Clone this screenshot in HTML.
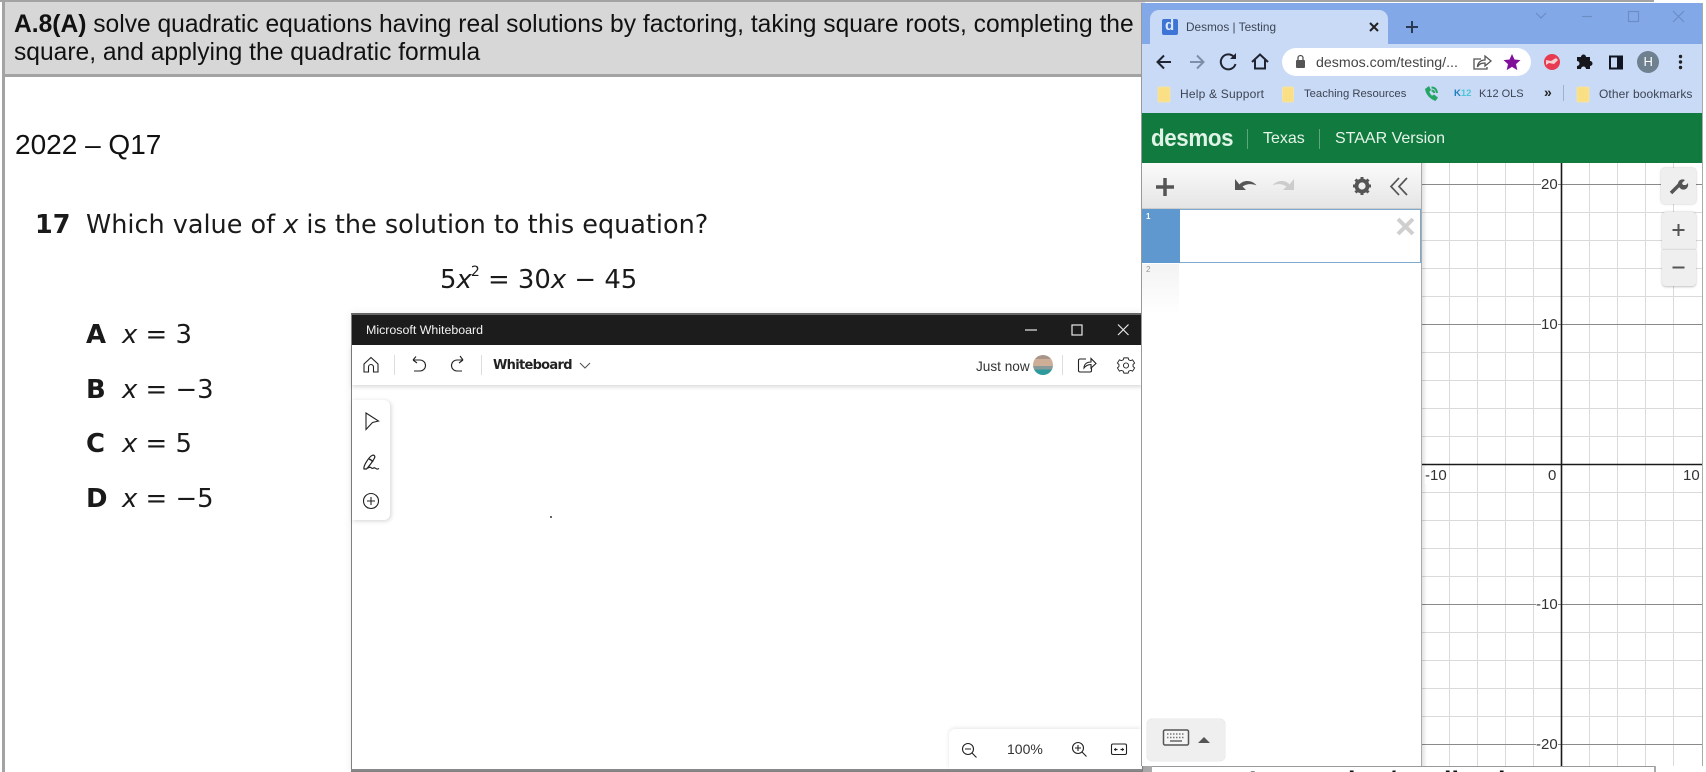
<!DOCTYPE html>
<html>
<head>
<meta charset="utf-8">
<style>
html,body{margin:0;padding:0;width:1706px;height:772px;overflow:hidden;background:#fff}
body{position:relative;font-family:"Liberation Sans",sans-serif;color:#111}
.a{position:absolute}
.t{position:absolute;white-space:nowrap}
svg{position:absolute;overflow:visible}
.dv{font-family:"DejaVu Sans",sans-serif;color:#1a1a1a}
.q{font-size:25.5px;line-height:32px}
.m{font-size:25.9px;line-height:32px}
.ct{font-size:12px;line-height:16px;color:#3c4452}
</style>
</head>
<body>
<!-- left document -->
<div class="a" style="left:0;top:0;width:1654px;height:2px;background:#a3a3a3"></div>
<div class="a" style="left:2px;top:0;width:3px;height:772px;background:#a3a3a3"></div>
<div class="a" style="left:5px;top:2px;width:1140px;height:72px;background:#d7d7d7"></div>
<div class="a" style="left:5px;top:74px;width:1140px;height:3px;background:#a3a3a3"></div>
<div class="t" style="left:14px;top:11px;font-size:24.6px;line-height:28px;color:#111"><b>A.8(A)</b> solve quadratic equations having real solutions by factoring, taking square roots, completing the</div>
<div class="t" style="left:14px;top:39px;font-size:24.6px;line-height:28px;color:#111">square, and applying the quadratic formula</div>
<div class="t" style="left:15px;top:129px;font-size:28px;line-height:32px;color:#111">2022 – Q17</div>

<div class="t dv q" style="left:35px;top:209px"><b>17</b></div>
<div class="t dv q" style="left:86px;top:209px">Which value of <i>x</i> is the solution to this equation?</div>
<div class="t dv m" style="left:440px;top:264px">5<i>x</i><sup style="font-size:14px;line-height:0;position:relative;top:-2px;margin-left:-1px">2</sup> = 30<i>x</i> − 45</div>
<div class="t dv m" style="left:86px;top:319px"><b>A</b></div>
<div class="t dv m" style="left:122px;top:319px"><i>x</i> = 3</div>
<div class="t dv m" style="left:86px;top:374px"><b>B</b></div>
<div class="t dv m" style="left:122px;top:374px"><i>x</i> = −3</div>
<div class="t dv m" style="left:86px;top:428px"><b>C</b></div>
<div class="t dv m" style="left:122px;top:428px"><i>x</i> = 5</div>
<div class="t dv m" style="left:86px;top:483px"><b>D</b></div>
<div class="t dv m" style="left:122px;top:483px"><i>x</i> = −5</div>

<!-- bottom strip -->
<div class="a" style="left:1141px;top:766px;width:565px;height:6px;background:#fff;overflow:hidden">
  <div class="a" style="left:0;top:0;width:513px;height:1px;background:#999"></div>
  <div class="a" style="left:0;top:0;width:11px;height:6px;background:#aaa"></div>
  <div class="a" style="left:513px;top:0;width:2px;height:6px;background:#aaa"></div>
  <div class="t" style="left:108px;top:0;font-size:27px;line-height:30px;font-weight:bold;color:#111">Instruction/application</div>
</div>

<!-- Whiteboard window -->
<div class="a" style="left:351px;top:313px;width:790px;height:456px;background:#fff;border:1px solid #808080;border-top:2px solid #666;box-shadow:0 0 8px rgba(0,0,0,.08)"></div>
<div class="a" style="left:352px;top:315px;width:790px;height:30px;background:#1c1c1c"></div>
<div class="t" style="left:366px;top:322px;font-size:12.4px;line-height:16px;color:#f2f2f2">Microsoft Whiteboard</div>
<svg style="left:0;top:0" width="1706" height="772" fill="none" stroke="#e8e8e8" stroke-width="1.2">
  <path d="M1025 330h12"/>
  <rect x="1072" y="325" width="10" height="10"/>
  <path d="M1118 324.500l10.500 10.500M1128.500 324.500l-10.500 10.500"/>
</svg>
<div class="a" style="left:352px;top:345px;width:790px;height:40px;background:#fff;box-shadow:0 2px 4px rgba(0,0,0,.15)"></div>
<div class="a" style="left:394px;top:355px;width:1px;height:20px;background:#ddd"></div>
<div class="a" style="left:481px;top:355px;width:1px;height:20px;background:#ddd"></div>
<div class="a" style="left:1062px;top:355px;width:1px;height:20px;background:#ddd"></div>
<div class="t" style="left:493px;top:357px;font-size:13px;line-height:18px;font-weight:bold;color:#222;font-family:'DejaVu Sans',sans-serif;letter-spacing:-.7px">Whiteboard</div>
<div class="t" style="left:976px;top:358px;font-size:13.6px;line-height:18px;color:#333">Just now</div>
<div class="a" style="left:1033px;top:355px;width:20px;height:20px;border-radius:50%;background:linear-gradient(#a8958a 0 20%,#cfae98 20% 55%,#8a9a9a 55% 72%,#2f9a9c 72%)"></div>
<svg style="left:0;top:0" width="1706" height="772" fill="none" stroke="#222" stroke-width="1.1">
  <path d="M364 364l7-6.500 7 6.500v8h-4.500v-5a2.500 2.500 0 0 0-5 0v5H364z"/>
  <path d="M413 360l3-3.500M413 360l4 3M413 360h7a5 5 0 0 1 0 11h-6"/>
  <path d="M463 360l-3-4M463 360l-4 3M463 360h-6a5.500 5.500 0 0 0 0 11h5"/>
  <path d="M580 363l5 5 5-5" stroke="#555"/>
  <path d="M1086 359h-6a1.500 1.500 0 0 0-1.500 1.500v10a1.500 1.500 0 0 0 1.500 1.500h10a1.500 1.500 0 0 0 1.500-1.500v-3"/>
  <path d="M1084 368c0-4 3-6 7-6v-3.500l5 5-5 4.500v-3.500c-3 0-5 1-7 3.500z"/>
  <g transform="translate(1126 365.500) scale(.85) translate(-1126 -366)">
  <path d="M1123.500 357h5l.7 2.300 2.300 1 2.200-1 2.400 3.800-1.800 1.700v2.400l1.800 1.700-2.400 3.800-2.200-1-2.300 1-.7 2.300h-5l-.7-2.300-2.300-1-2.200 1-2.400-3.800 1.800-1.700v-2.400l-1.800-1.700 2.400-3.800 2.200 1 2.300-1z"/>
  <circle cx="1126" cy="366" r="3"/>
  </g>
</svg>
<div class="a" style="left:352px;top:400px;width:38px;height:120px;background:#fff;border-radius:0 6px 6px 0;box-shadow:1px 1px 5px rgba(0,0,0,.18)"></div>
<svg style="left:0;top:0" width="1706" height="772" fill="none" stroke="#222" stroke-width="1.1">
  <path d="M366 413l12.500 8-6 1.500-6.500 7z"/>
  <path d="M364 469c-1-3 5-12 8-13.500 2-1 3.500.5 2.500 2.500-1.500 3-6 9-8 11zM366.500 468.500c3-1 3.500-2 5-.5s2-1 3.500 0 2 1.500 4 .5M369 459c1.500 .5 3 1.500 4 3" stroke-width="1.200"/>
  <circle cx="371" cy="501" r="7.500"/><path d="M371 497v8M367 501h8"/>
</svg>
<div class="a" style="left:550px;top:516px;width:2px;height:2px;background:#666"></div>
<!-- zoom panel -->
<div class="a" style="left:949px;top:729px;width:192px;height:40px;background:#fff;border-radius:6px 0 0 0;box-shadow:0 -1px 4px rgba(0,0,0,.1)"></div>
<div class="t" style="left:1007px;top:741px;font-size:14px;line-height:16px;color:#333">100%</div>
<svg style="left:0;top:0" width="1706" height="772" fill="none" stroke="#222" stroke-width="1.1">
  <circle cx="968" cy="749" r="5.500"/><path d="M965 749h6M972 753l4.500 4.500"/>
  <circle cx="1078" cy="748" r="5.500"/><path d="M1075 748h6M1078 745v6M1082 752l4.500 4.500"/>
  <rect x="1111.500" y="744" width="15" height="10.500" rx="1.500"/>
  <path d="M1114 749.500h3.500M1120.500 749.500h3.500" stroke-width="1.300"/>
  <path d="M1114 749.500l2-1.800v3.600zM1124 749.500l-2-1.800v3.600z" fill="#222" stroke="none"/>
</svg>
<div class="a" style="left:351px;top:769px;width:791px;height:2px;background:#888"></div>

<!-- Chrome window -->
<div class="a" style="left:1141px;top:3px;width:562px;height:763px;background:#fff;border-left:1px solid #999;border-right:1px solid #aaa;box-sizing:border-box"></div>
<div class="a" style="left:1142px;top:3px;width:560px;height:41px;background:#83a8e8"></div>
<div class="a" style="left:1142px;top:44px;width:560px;height:69px;background:#c9daf6"></div>
<div class="a" style="left:1150px;top:10px;width:238px;height:36px;background:#c9daf6;border-radius:9px 9px 0 0"></div>
<div class="a" style="left:1162px;top:19px;width:16px;height:16px;background:#3d74d6;border-radius:2px"></div>
<div class="t" style="left:1165px;top:17px;font-size:15px;line-height:18px;font-weight:bold;color:#dde8fa">d</div>
<div class="t ct" style="left:1186px;top:19px;font-size:11.8px">Desmos | Testing</div>
<svg style="left:0;top:0" width="1706" height="772" fill="none" stroke="#222" stroke-width="2">
  <path d="M1370 23l8 8M1378 23l-8 8"/>
  <path d="M1412 21v12M1406 27h12" stroke="#2a3a55"/>
  <g stroke="#6c8cc4" stroke-width="1.200">
    <path d="M1536 13l5 5 5-5"/>
    <path d="M1582 16.500h10"/>
    <rect x="1628.500" y="11.500" width="10" height="10"/>
    <path d="M1673 11l11 11M1684 11l-11 11"/>
  </g>
  <path d="M1171 62h-13M1164 55.500l-6.500 6.500 6.500 6.500" stroke="#1f2430"/>
  <path d="M1190 62h13M1197 55.500l6.500 6.500-6.500 6.500" stroke="#7e8ea8"/>
  <path d="M1234 57a7.500 7.500 0 1 0 1.500 7" stroke="#1f2430"/>
  <path d="M1236 53v6h-6z" fill="#1f2430" stroke="none"/>
  <path d="M1252 62l8-7.500 8 7.500M1255 60v8.500h10V60" stroke="#1f2430"/>
</svg>
<div class="a" style="left:1282px;top:48px;width:249px;height:28px;background:#fff;border-radius:14px"></div>
<div class="a" style="left:1296px;top:60px;width:9px;height:8px;background:#555;border-radius:1px"></div>
<svg style="left:0;top:0" width="1706" height="772" fill="none" stroke="#555" stroke-width="1.300">
  <path d="M1298 60v-2a2.500 2.500 0 0 1 5 0v2"/>
  <path d="M1485 60v-4l6 5-6 5v-3c-4 0-6 1-7.500 4 0-4 3-7 7.500-7z"/>
  <path d="M1481 59h-7v10h13v-2"/>
  <path d="M1512 54l2.500 5.500 6 .6-4.500 4 1.300 6-5.300-3.200-5.300 3.200 1.300-6-4.500-4 6-.6z" fill="#80109a" stroke="none"/>
  <circle cx="1552" cy="62" r="8" fill="#e83a50" stroke="none"/>
  <path d="M1546 60l5 1 5-3 2 2-4 4-5-1-3 2z" fill="#f4d0d0" stroke="none"/>
  <path d="M1577 58h4a2.500 2.500 0 0 1 5 0h4v4a2.500 2.500 0 0 1 0 5v3h-4a2.500 2.500 0 0 0-5 0h-4v-3a2.500 2.500 0 0 0 0-5z" fill="#15171d" stroke="none" transform="translate(0 -1)"/>
  <rect x="1610" y="56.500" width="12" height="12" stroke="#101420" stroke-width="2"/>
  <rect x="1617" y="56.500" width="6" height="12" fill="#101420" stroke="none"/>
  <circle cx="1680.500" cy="56.500" r="1.700" fill="#222" stroke="none"/>
  <circle cx="1680.500" cy="62" r="1.700" fill="#222" stroke="none"/>
  <circle cx="1680.500" cy="67.500" r="1.700" fill="#222" stroke="none"/>
  <g fill="#fbdf85" stroke="#f3e3a8" stroke-width="1">
    <rect x="1158" y="87" width="12" height="15" rx="1.500"/>
    <rect x="1282.500" y="87" width="11" height="15" rx="1.500"/>
    <rect x="1577" y="87" width="12" height="15" rx="1.500"/>
  </g>
  <path d="M1425 89c1 6 5 10 10.500 12l2.500-3.500-4-3-2 1.200c-1-1-2.200-2.400-2.600-4l1.600-1.700-2-4z" fill="#25a565" stroke="none"/>
  <path d="M1431.500 87.500c3 0 5 2 5.500 5.500M1431.500 90.500c1.500 0 2.500 1 2.700 2.500" stroke="#25a565" stroke-width="2"/>
  <path d="M1563.500 85v16" stroke="#9fb0c8" stroke-width="1"/>
</svg>
<div class="t" style="left:1316px;top:54px;font-size:14.2px;line-height:18px;color:#444">desmos.com/testing/...</div>
<div class="a" style="left:1637px;top:51px;width:22px;height:22px;border-radius:50%;background:#6f808e"></div>
<div class="t" style="left:1643.500px;top:54px;font-size:13px;line-height:16px;color:#fff">H</div>
<div class="t ct" style="left:1180px;top:85.500px;letter-spacing:.2px">Help &amp; Support</div>
<div class="t ct" style="left:1304px;top:86px;font-size:11.3px">Teaching Resources</div>
<div class="t" style="left:1454px;top:87px;font-size:9.5px;line-height:14px;font-weight:bold;color:#1e7fc0">K<span style="color:#4cc6d8">12</span></div>
<div class="t ct" style="left:1479px;top:86px;font-size:11px">K12 OLS</div>
<div class="t" style="left:1544px;top:84px;font-size:14px;line-height:16px;font-weight:bold;color:#222">»</div>
<div class="t ct" style="left:1599px;top:85.500px;letter-spacing:.1px">Other bookmarks</div>

<!-- Desmos green bar -->
<div class="a" style="left:1142px;top:113px;width:560px;height:50px;background:#117a3e"></div>
<div class="t" style="left:1151px;top:125px;font-size:24px;line-height:28px;font-weight:bold;color:#dff3e6;letter-spacing:-.4px;transform:scaleX(.93);transform-origin:0 0">desmos</div>
<div class="a" style="left:1247px;top:129px;width:1px;height:20px;background:#5fa67c"></div>
<div class="a" style="left:1319px;top:129px;width:1px;height:20px;background:#5fa67c"></div>
<div class="t" style="left:1263px;top:129px;font-size:16px;line-height:20px;color:#e6f4ea">Texas</div>
<div class="t" style="left:1335px;top:129px;font-size:16px;line-height:20px;color:#e6f4ea">STAAR Version</div>

<!-- graph -->
<svg style="left:0;top:0" width="1706" height="772">
  <g stroke="#dadada" stroke-width="1" fill="none">
    <path d="M1449.500 163V766M1477.500 163V766M1505.500 163V766M1533.500 163V766M1589.500 163V766M1617.500 163V766M1645.500 163V766M1673.500 163V766"/>
    <path d="M1422 212.500H1702M1422 240.500H1702M1422 268.500H1702M1422 296.500H1702M1422 352.500H1702M1422 380.500H1702M1422 408.500H1702M1422 436.500H1702M1422 492.500H1702M1422 520.500H1702M1422 548.500H1702M1422 576.500H1702M1422 632.500H1702M1422 660.500H1702M1422 688.500H1702M1422 716.500H1702"/>
  </g>
  <g stroke="#8a8a8a" stroke-width="1" fill="none">
    <path d="M1422 184.500H1702M1422 324.500H1702M1422 604.500H1702M1422 744.500H1702"/>
  </g>
  <path d="M1422 464.500H1702" stroke="#1a1a1a" stroke-width="1.600"/>
  <path d="M1561.500 163V766" stroke="#1a1a1a" stroke-width="1.600"/>
</svg>
<div class="a" style="left:1422px;top:163px;width:5px;height:603px;background:linear-gradient(90deg,rgba(0,0,0,.12),rgba(0,0,0,0))"></div>
<div class="t" style="left:1541px;top:176px;font-size:15px;line-height:17px;color:#333;background:#fff">20</div>
<div class="t" style="left:1541px;top:316px;font-size:15px;line-height:17px;color:#333;background:#fff">10</div>
<div class="t" style="left:1536px;top:596px;font-size:15px;line-height:17px;color:#333;background:#fff">-10</div>
<div class="t" style="left:1536px;top:736px;font-size:15px;line-height:17px;color:#333;background:#fff">-20</div>
<div class="t" style="left:1425px;top:467px;font-size:15px;line-height:17px;color:#333;background:#fff">-10</div>
<div class="t" style="left:1548px;top:467px;font-size:15px;line-height:17px;color:#333;background:#fff">0</div>
<div class="t" style="left:1683px;top:467px;font-size:15px;line-height:17px;color:#333;background:#fff">10</div>

<!-- graph buttons -->
<div class="a" style="left:1661px;top:168px;width:35px;height:36px;background:#efefef;border-radius:4px;box-shadow:0 0 2px rgba(0,0,0,.25)"></div>
<div class="a" style="left:1662px;top:212px;width:34px;height:37px;background:#efefef;border-radius:4px 4px 0 0;box-shadow:0 0 2px rgba(0,0,0,.25)"></div>
<div class="a" style="left:1662px;top:249px;width:34px;height:37px;background:#efefef;border-top:1px solid #ddd;box-sizing:border-box;border-radius:0 0 4px 4px;box-shadow:0 1px 2px rgba(0,0,0,.25)"></div>
<svg style="left:0;top:0" width="1706" height="772" fill="none" stroke="#555">
  <path d="M1671 193l9-9" stroke-width="3.500"/>
  <path d="M1678 186c-1-5 3-8 7-6l-3 3 1 2 3 0 2-2c1 5-3 8-7 6z" fill="#555" stroke="none"/>
  <path d="M1678.500 224v12M1672.500 230h12" stroke-width="2"/>
  <path d="M1672.500 267.500h12" stroke-width="2"/>
</svg>

<!-- expression panel -->
<div class="a" style="left:1142px;top:163px;width:279px;height:603px;background:#fff;border-right:1px solid #aaa"></div>
<div class="a" style="left:1142px;top:163px;width:279px;height:45px;background:linear-gradient(#fbfbfb,#e5e5e5);border-bottom:1px solid #ccc"></div>
<div class="a" style="left:1142px;top:264px;width:37px;height:50px;background:linear-gradient(#f3f3f3,#fff)"></div>
<div class="a" style="left:1142px;top:209px;width:279px;height:54px;background:#fff;border:1px solid #7eaad0;box-sizing:border-box"></div>
<div class="a" style="left:1142px;top:209px;width:38px;height:54px;background:#5f97cf"></div>
<div class="t" style="left:1146px;top:212px;font-size:8px;line-height:10px;font-weight:bold;color:#fff">1</div>
<div class="t" style="left:1146px;top:265px;font-size:8px;line-height:10px;color:#999">2</div>
<svg style="left:0;top:0" width="1706" height="772" fill="none">
  <path d="M1165 178v18M1156 187h18" stroke="#555" stroke-width="3.500"/>
  <path d="M1235 179v11h11l-3.500-3.500c4-3 10-3 14-1-4-5.500-13-6-17-1z" fill="#555"/>
  <path d="M1294 179v11h-11l3.500-3.500c-4-3-10-3-14-1 4-5.500 13-6 17-1z" fill="#ccc"/>
  <circle cx="1362" cy="186" r="5.500" stroke="#555" stroke-width="3.800"/>
  <path d="M1362 177v3M1362 192v3M1353 186h3M1368 186h3M1355.500 179.500l2.500 2.500M1366 190l2.500 2.500M1368.500 179.500l-2.500 2.500M1358 190l-2.500 2.500" stroke="#555" stroke-width="3"/>
  <path d="M1399 178l-8 8.500 8 8.500M1407 178l-8 8.500 8 8.500" stroke="#555" stroke-width="1.700"/>
  <path d="M1398 219l15 15M1413 219l-15 15" stroke="#cfcfcf" stroke-width="4"/>
</svg>
<div class="a" style="left:1147px;top:719px;width:78px;height:42px;background:#efefef;border-radius:5px;box-shadow:0 0 1px rgba(0,0,0,.3)"></div>
<svg style="left:0;top:0" width="1706" height="772" fill="none">
  <rect x="1163.500" y="730" width="25" height="15" rx="1.500" stroke="#555" stroke-width="1.500" fill="#f5f5f5"/>
  <path d="M1167 734h18M1167 737.500h18" stroke="#777" stroke-width="1.500" stroke-dasharray="1.500 1.500"/>
  <path d="M1170 741h12" stroke="#666" stroke-width="1.500"/>
  <path d="M1198 743l6-6 6 6z" fill="#555"/>
</svg>
</body>
</html>
